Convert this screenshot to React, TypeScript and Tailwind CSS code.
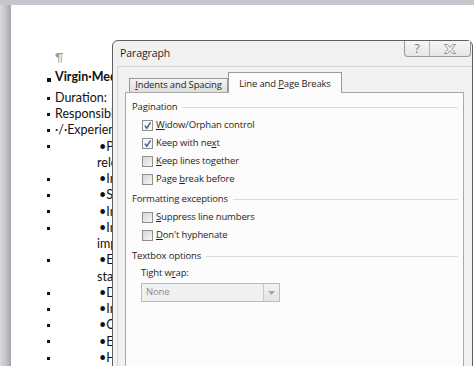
import React from "react"

type DocLine = { bullet?: boolean; text: string; kind: "top" | "sub" | "cont" }

const DOC_LINES: DocLine[] = [
  { bullet: true, text: "Duration: ", kind: "top" },
  { bullet: true, text: "Responsibilities:", kind: "top" },
  { bullet: true, text: "·/·Experience", kind: "top" },
  { bullet: true, text: "•Participated", kind: "sub" },
  { text: "relevant", kind: "cont" },
  { bullet: true, text: "•Involved", kind: "sub" },
  { bullet: true, text: "•Supported", kind: "sub" },
  { bullet: true, text: "•Interacted", kind: "sub" },
  { bullet: true, text: "•Involved", kind: "sub" },
  { text: "implement", kind: "cont" },
  { bullet: true, text: "•Established", kind: "sub" },
  { text: "standards", kind: "cont" },
  { bullet: true, text: "•Developed", kind: "sub" },
  { bullet: true, text: "•Integrated", kind: "sub" },
  { bullet: true, text: "•Conducted", kind: "sub" },
  { bullet: true, text: "•Executed", kind: "sub" },
  { bullet: true, text: "•Handled", kind: "sub" },
]

function Check({ checked }: { checked?: boolean }) {
  return (
    <span
      className={
        "flex h-[11px] w-[11px] shrink-0 items-center justify-center border border-[#8f8f8f] " +
        (checked ? "bg-[#f7f7f7]" : "bg-gradient-to-br from-[#d6d6d6] to-[#f6f6f6]")
      }
    >
      {checked && (
        <svg width="9" height="9" viewBox="0 0 9 9">
          <path d="M1.8 4.6 L3.8 7.2 L7.6 1.4" fill="none" stroke="#3a5f95" strokeWidth="1.4" />
        </svg>
      )}
    </span>
  )
}

function CheckRow({ checked, children }: { checked?: boolean; children: React.ReactNode }) {
  return (
    <div className="flex h-[18px] items-center gap-[3px] pl-[16px]">
      <Check checked={checked} />
      <span>{children}</span>
    </div>
  )
}

function Section({ label }: { label: string }) {
  return (
    <div className="flex h-[14px] items-center gap-[5px] pl-[6px] pr-[5px]">
      <span>{label}</span>
      <span className="h-px flex-1 bg-[#dcdcdc]" />
    </div>
  )
}

export default function App() {
  return (
    <div className="flex h-[366px] w-[474px] flex-col overflow-hidden bg-[#c5c7cc]">
      <div className="h-[5px] shrink-0" />
      <div className="flex flex-1">
        <div className="w-[11px] shrink-0 bg-gradient-to-r from-[#dadbde] via-[#c4c6ca] to-[#a4a6aa]" />
        <div className="relative flex-1 bg-white font-['Lato',sans-serif] text-[12.5px] text-[#111]">
          {/* document, cut where the dialog starts */}
          <div className="w-[101px] overflow-hidden pt-[44px]">
            <div className="flex h-[16px] items-center pl-[44px] text-[12px] text-[#9a9a9a]">¶</div>
            <div className="mt-[4px] flex h-[16px] items-center whitespace-nowrap">
              <span className="w-[44px] shrink-0 pl-[36px]">
                <span className="mt-[6px] block h-[4px] w-[4px] bg-[#111]" />
              </span>
              <span className="font-bold">Virgin·Media</span>
            </div>
            <div className="mt-[5px]">
              {DOC_LINES.map((l, i) => (
                <div key={i} className="flex h-[16.25px] items-center whitespace-nowrap">
                  <span className="w-[44px] shrink-0 pl-[36px]">
                    {l.bullet && <span className="block h-[3px] w-[3px] bg-[#111]" />}
                  </span>
                  <span className={l.kind === "sub" ? "ml-[44px]" : l.kind === "cont" ? "ml-[42px]" : ""}>
                    {l.text}
                  </span>
                </div>
              ))}
            </div>
          </div>

          {/* dialog window */}
          <div className="absolute left-[101px] top-[35px] flex h-[340px] w-[361px] flex-col rounded-t-[6px] border border-[#5f5f5f] bg-[#f1f1f1] font-['Open_Sans',sans-serif] text-[9.5px] tracking-[-0.15px] text-[#1e1e1e]">
            <div className="flex h-[25px] shrink-0 items-start justify-between">
              <span className="pl-[7px] pt-[5px] text-[10.5px] tracking-[-0.1px]">Paragraph</span>
              <div className="mr-[1px] flex h-[16px] overflow-hidden rounded-b-[4px] border border-t-0 border-[#9a9a9a] bg-gradient-to-b from-[#f6f6f6] to-[#e6e6e6]">
                <span className="flex w-[25px] items-center justify-center border-r border-[#b5b5b5] text-[12px] leading-none text-[#7a7a7a]">
                  ?
                </span>
                <span className="flex w-[40px] items-center justify-center">
                  <svg width="12" height="10" viewBox="0 0 12 10">
                    <path
                      d="M0.5 0.5 H3.5 L6 3.5 L8.5 0.5 H11.5 L7.8 5 L11.5 9.5 H8.5 L6 6.5 L3.5 9.5 H0.5 L4.2 5 Z"
                      fill="#fafafa"
                      stroke="#8a8a8a"
                      strokeWidth="0.9"
                    />
                  </svg>
                </span>
              </div>
            </div>
            <div className="ml-[4px] flex flex-1 flex-col border-l border-t border-[#d4d4d4] pl-[7px] pt-[5px]">
              <div className="flex h-[20px] items-end pl-[4px]">
                <div className="flex h-[14px] w-[99px] items-center justify-center border border-b-0 border-[#9a9a9a] bg-gradient-to-b from-[#f4f4f4] to-[#dedede]">
                  <span>
                    <span className="underline">I</span>ndents and Spacing
                  </span>
                </div>
                <div className="relative z-10 -mb-px flex h-[21px] w-[114px] items-start justify-center border border-b-0 border-[#9a9a9a] bg-[#fcfcfc] pt-[4px]">
                  <span>
                    Line and <span className="underline">P</span>age Breaks
                  </span>
                </div>
              </div>
              <div className="h-[300px] w-[339px] border border-[#a9a9a9] bg-[#fcfcfc] pt-[7px]">
                <Section label="Pagination" />
                <div className="mt-[2px]">
                  <CheckRow checked>
                    <span className="underline">W</span>idow/Orphan control
                  </CheckRow>
                  <CheckRow checked>
                    Keep with ne<span className="underline">x</span>t
                  </CheckRow>
                  <CheckRow>
                    <span className="underline">K</span>eep lines together
                  </CheckRow>
                  <CheckRow>
                    Page <span className="underline">b</span>reak before
                  </CheckRow>
                </div>
                <div className="mt-[4px]">
                  <Section label="Formatting exceptions" />
                </div>
                <div className="mt-[2px]">
                  <CheckRow>
                    <span className="underline">S</span>uppress line numbers
                  </CheckRow>
                  <CheckRow>
                    <span className="underline">D</span>on't hyphenate
                  </CheckRow>
                </div>
                <div className="mt-[5px]">
                  <Section label="Textbox options" />
                </div>
                <div className="mt-[3px] flex h-[14px] items-center pl-[15px]">
                  Tight w<span className="underline">r</span>ap:
                </div>
                <div className="ml-[15px] mt-[3px] flex h-[19px] w-[139px] border border-[#bcbcbc] bg-[#f0f0f0]">
                  <span className="flex flex-1 items-center pl-[4px] text-[#8c8c8c]">None</span>
                  <span className="flex w-[16px] items-center justify-center border-l border-[#c8c8c8] bg-gradient-to-b from-[#f3f3f3] to-[#e4e4e4]">
                    <svg width="7" height="4" viewBox="0 0 7 4">
                      <path d="M0 0 H7 L3.5 4 Z" fill="#a8a8a8" />
                    </svg>
                  </span>
                </div>
              </div>
            </div>
          </div>
        </div>
      </div>
    </div>
  )
}
